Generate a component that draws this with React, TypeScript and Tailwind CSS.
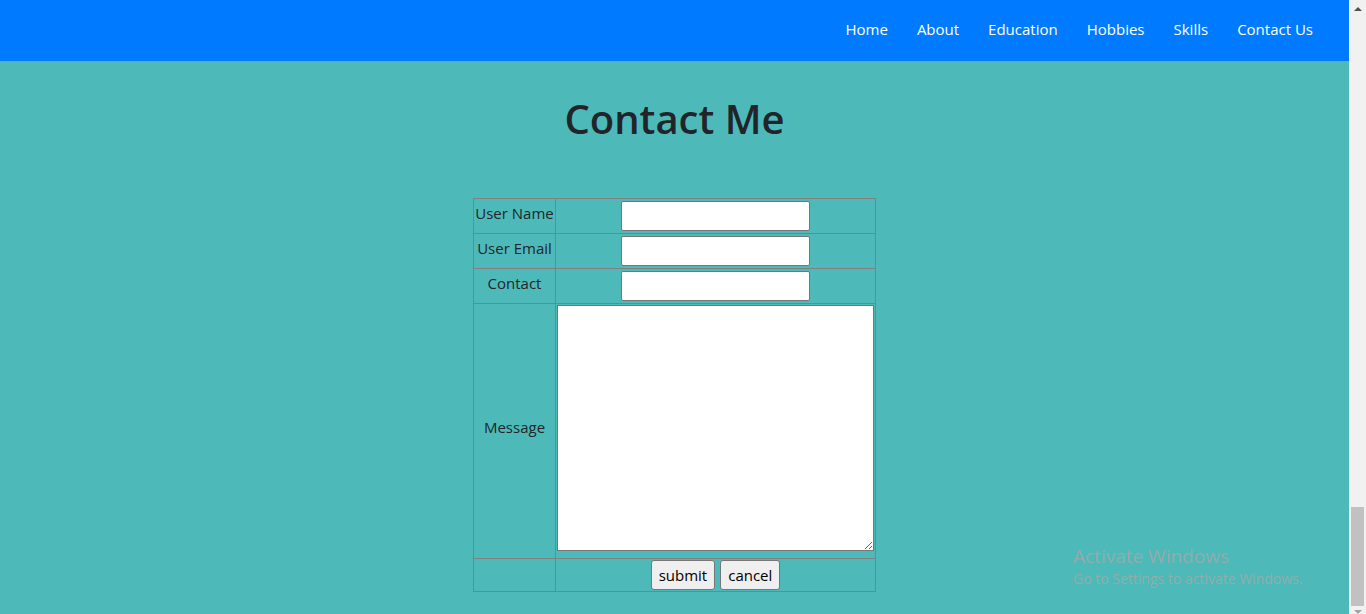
const navLinks = ["Home", "About", "Education", "Hobbies", "Skills", "Contact Us"];

const fields = ["User Name", "User Email", "Contact"];

const cell = "border border-[#808080] p-0";

function Scrollbar() {
  return (
    <div className="flex h-full w-[17px] flex-none flex-col items-center bg-[#f1f1f1]">
      <div className="flex h-[17px] w-full items-center justify-center">
        <div className="h-0 w-0 border-x-[4px] border-b-[4px] border-x-transparent border-b-[#505050]" />
      </div>
      <div className="flex-1" />
      <div className="h-[99px] w-[13px] bg-[#c1c1c1]" />
      <div className="flex h-[8px] w-full items-end justify-center">
        <div className="h-0 w-0 border-x-[4px] border-t-[4px] border-x-transparent border-t-[#a3a3a3]" />
      </div>
    </div>
  );
}

export default function App() {
  return (
    <div className="flex h-[614px] w-full overflow-hidden font-['Open_Sans',sans-serif]">
      <div className="relative flex flex-1 flex-col bg-[#4dbab9]">
        <nav className="flex h-[61px] flex-none items-center justify-end gap-[29px] bg-[#007bff] pb-[2px] pr-[36px] text-[15px] text-white">
          {navLinks.map((link) => (
            <a key={link} className="cursor-pointer">
              {link}
            </a>
          ))}
        </nav>

        <h1 className="mt-[30px] text-center text-[40px] font-semibold leading-[56px] text-[#212529]">
          Contact Me
        </h1>

        <div className="mt-[51px] flex justify-center">
          <table className="border-collapse text-[15px] text-[#212529]">
            <tbody>
              {fields.map((label) => (
                <tr key={label} className="h-[35px]">
                  <td className={`${cell} w-[82px] pb-[6px] text-center align-middle leading-tight`}>
                    {label}
                  </td>
                  <td className={`${cell} w-[320px] text-center align-middle`}>
                    <input
                      type="text"
                      className="mx-auto block h-[30px] w-[189px] rounded-[2px] border border-[#767676] bg-white"
                    />
                  </td>
                </tr>
              ))}
              <tr className="h-[255px]">
                <td className={`${cell} pb-[8px] text-center align-middle`}>Message</td>
                <td className={`${cell} align-top`}>
                  <textarea className="mx-auto mt-[1px] block h-[246px] w-[317px] border border-[#767676] bg-white" />
                </td>
              </tr>
              <tr className="h-[33px]">
                <td className={cell}></td>
                <td className={`${cell} align-middle`}>
                  <div className="flex justify-center gap-[5px]">
                    <button className="h-[30px] rounded-[3px] border border-[#767676] bg-[#efefef] px-[7px] text-[15px] text-black">
                      submit
                    </button>
                    <button className="h-[30px] rounded-[3px] border border-[#767676] bg-[#efefef] px-[7px] text-[15px] text-black">
                      cancel
                    </button>
                  </div>
                </td>
              </tr>
            </tbody>
          </table>
        </div>

        <div className="absolute left-[1073px] top-[544px] text-[#93abab]">
          <p className="text-[19px] leading-[25px]">Activate Windows</p>
          <p className="text-[14px] leading-[20px]">Go to Settings to activate Windows.</p>
        </div>
      </div>
      <Scrollbar />
    </div>
  );
}
